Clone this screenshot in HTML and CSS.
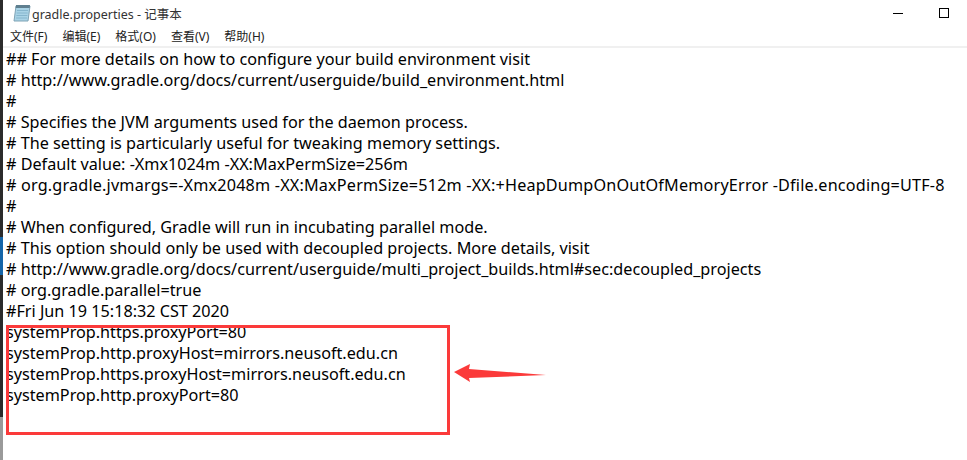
FILE: index.html
```html
<!DOCTYPE html>
<html lang="en">
<head>
    <meta charset="UTF-8">
    <title>gradle.properties - 记事本</title>
    <link rel="stylesheet" href="styles.css">
</head>
<body>

    <div class="window">
        <div class="title-bar">
            <svg class="app-icon" width="20" height="20" viewBox="0 0 20 20">
                <path d="M4 3 H18 L16 18 H2 Z" fill="#a9d3e6" stroke="#7fa3b5" stroke-width="1"/>
                <path d="M4 2 H18 L17.7 5 H3.7 Z" fill="#5f7f8f"/>
                <path d="M5 7.5 H16 M4.7 10 H15.7 M4.4 12.5 H15.4 M4.1 15 H15.1" stroke="#86b6cd" stroke-width="1"/>
            </svg>
            <span class="title-text">gradle.properties - 记事本</span>
            <div class="window-controls">
                <span class="minimize"></span>
                <span class="maximize"></span>
            </div>
        </div>

        <div class="menu-bar">
            <span>文件(F)</span>
            <span>编辑(E)</span>
            <span>格式(O)</span>
            <span>查看(V)</span>
            <span>帮助(H)</span>
        </div>

        <div class="editor">
            <div class="line">## For more details on how to configure your build environment visit</div>
            <div class="line"># http://www.gradle.org/docs/current/userguide/build_environment.html</div>
            <div class="line">#</div>
            <div class="line"># Specifies the JVM arguments used for the daemon process.</div>
            <div class="line"># The setting is particularly useful for tweaking memory settings.</div>
            <div class="line"># Default value: -Xmx1024m -XX:MaxPermSize=256m</div>
            <div class="line wide"># org.gradle.jvmargs=-Xmx2048m -XX:MaxPermSize=512m -XX:+HeapDumpOnOutOfMemoryError -Dfile.encoding=UTF-8</div>
            <div class="line">#</div>
            <div class="line"># When configured, Gradle will run in incubating parallel mode.</div>
            <div class="line"># This option should only be used with decoupled projects. More details, visit</div>
            <div class="line"># http://www.gradle.org/docs/current/userguide/multi_project_builds.html#sec:decoupled_projects</div>
            <div class="line"># org.gradle.parallel=true</div>
            <div class="line">#Fri Jun 19 15:18:32 CST 2020</div>
            <div class="line">systemProp.https.proxyPort=80</div>
            <div class="line">systemProp.http.proxyHost=mirrors.neusoft.edu.cn</div>
            <div class="line">systemProp.https.proxyHost=mirrors.neusoft.edu.cn</div>
            <div class="line">systemProp.http.proxyPort=80</div>
        </div>
    </div>

    <!-- red annotation drawn on top of the screenshot -->
    <div class="mark-box"></div>
    <svg class="mark-arrow" width="92" height="18" viewBox="0 0 92 18">
        <path d="M0 8 L16 0 L15 5 L92 11 L15 14 L16 18 Z" fill="#fb3a3a"/>
    </svg>

</body>
</html>
```

FILE: styles.css
```css
body {
    margin: 0;
    background-color: #fff;
    color: #000;
    font-family: "Noto Sans", "Noto Sans CJK SC", sans-serif;
    overflow: hidden;
}

.window {
    height: 460px;
    padding-left: 3px;
    background-color: #fff;
    background-image: linear-gradient(#2b2b2b 0, #2b2b2b 237px, #1565a8 237px, #1565a8 275px, #2b2b2b 275px, #2b2b2b 417px, #9a9a9a 417px);
    background-size: 3px 100%;
    background-repeat: no-repeat;
}

.title-bar {
    display: flex;
    align-items: center;
    height: 26px;
    padding-left: 9px;
}

.title-text {
    font-size: 12.5px;
    color: #333;
}

.window-controls {
    display: flex;
    align-items: center;
    gap: 36px;
    margin-left: auto;
    margin-right: 18px;
}

.minimize {
    width: 10px;
    height: 1px;
    background-color: #000;
}

.maximize {
    width: 8px;
    height: 8px;
    border: 1px solid #000;
}

.menu-bar {
    display: flex;
    align-items: center;
    gap: 15px;
    height: 20px;
    padding-left: 7px;
    border-bottom: 2px solid #f0f0f0;
    font-size: 12px;
    color: #222;
}

.editor {
    padding: 1px 0 0 3px;
    font-size: 16.2px;
    line-height: 21px;
    white-space: nowrap;
}

.wide {
    letter-spacing: 0.18px;
}

.mark-box {
    position: absolute;
    left: 6px;
    top: 325px;
    width: 438px;
    height: 104px;
    border: 3px solid #fb3a3a;
}

.mark-arrow {
    position: absolute;
    left: 454px;
    top: 364px;
}
```
